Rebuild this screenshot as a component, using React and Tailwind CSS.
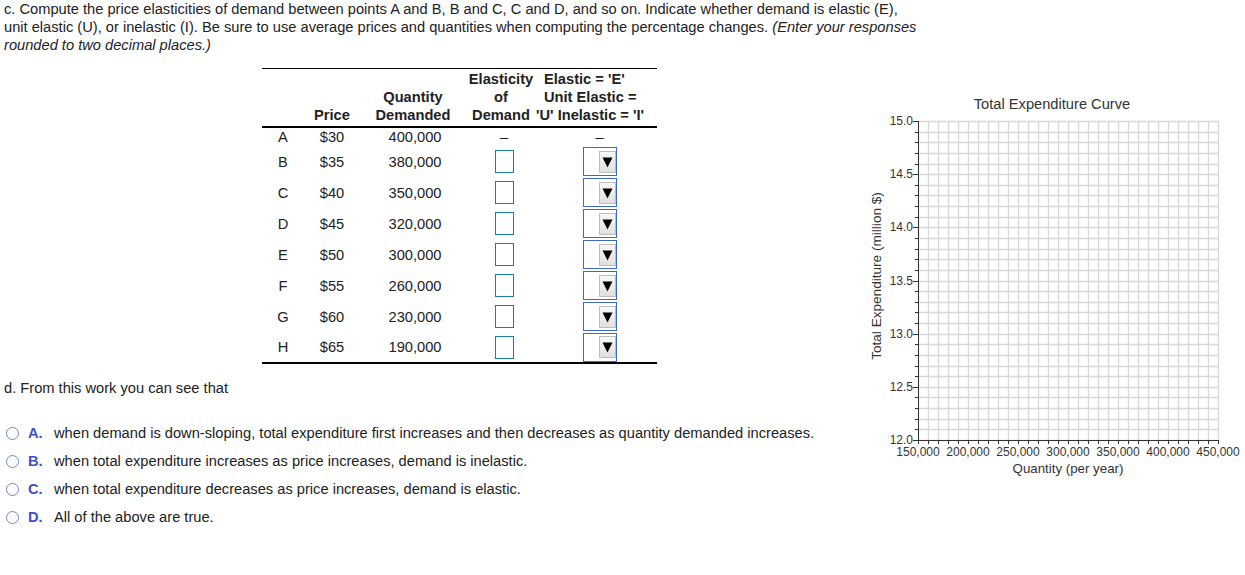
import React from 'react';

const rows = [
  { k: 'A', p: '$30', q: '400,000', first: true },
  { k: 'B', p: '$35', q: '380,000' },
  { k: 'C', p: '$40', q: '350,000' },
  { k: 'D', p: '$45', q: '320,000' },
  { k: 'E', p: '$50', q: '300,000' },
  { k: 'F', p: '$55', q: '260,000' },
  { k: 'G', p: '$60', q: '230,000' },
  { k: 'H', p: '$65', q: '190,000' },
];

const options = [
  { l: 'A.', t: 'when demand is down-sloping, total expenditure first increases and then decreases as quantity demanded increases.' },
  { l: 'B.', t: 'when total expenditure increases as price increases, demand is inelastic.' },
  { l: 'C.', t: 'when total expenditure decreases as price increases, demand is elastic.' },
  { l: 'D.', t: 'All of the above are true.' },
];

const Dropdown = () => (
  <div className="w-[34px] h-[29px] mx-auto border-[1.5px] border-[#3b69c9] flex items-center justify-end">
    <div className="w-[17px] h-[22px] border border-[#bdbdbd] bg-gradient-to-b from-[#f8f8f8] to-[#e0e0e0] flex items-center justify-center">
      <svg width="11" height="12" viewBox="0 0 11 12">
        <polygon points="0.5,1.5 10.5,1.5 5.5,11.5" fill="#000" />
      </svg>
    </div>
  </div>
);

const InputBox = () => (
  <div className="w-[19px] h-[23px] mx-auto border-[1.5px] border-[#17809e] bg-white" />
);

const Chart = () => {
  const L = 58;
  const T = 29;
  const W = 300;
  const H = 319;
  const B = T + H;
  const vs = Array.from({ length: 31 }, (_, i) => i);
  const yLabels = ['15.0', '14.5', '14.0', '13.5', '13.0', '12.5', '12.0'];
  const xLabels = ['150,000', '200,000', '250,000', '300,000', '350,000', '400,000', '450,000'];
  return (
    <svg width="385" height="392" className="block mt-[38px] shrink-0" style={{ fontFamily: '"Liberation Sans", Arial, sans-serif' }}>
      <text x="192" y="17" fontSize="14.67" fill="#333" textAnchor="middle">Total Expenditure Curve</text>
      {vs.map((i) => (
        <line key={'v' + i} x1={L + i * 10 + 0.5} x2={L + i * 10 + 0.5} y1={T} y2={B} stroke="#d8d8d8" strokeWidth="1.3" />
      ))}
      {vs.map((j) => {
        const y = Math.round(T + (H * j) / 30) + 0.5;
        return <line key={'h' + j} x1={L} x2={L + W + 1} y1={y} y2={y} stroke="#d8d8d8" strokeWidth="1.3" />;
      })}
      <line x1={L + 0.5} x2={L + 0.5} y1={T} y2={B + 1} stroke="#333" strokeWidth="1" />
      <line x1={L} x2={L + W + 1} y1={B + 0.5} y2={B + 0.5} stroke="#333" strokeWidth="1" />
      {vs.map((j) => {
        const y = Math.round(T + (H * j) / 30) + 0.5;
        const major = j % 5 === 0;
        return <line key={'yt' + j} x1={L - (major ? 5 : 3)} x2={L} y1={y} y2={y} stroke="#333" strokeWidth="1" />;
      })}
      {vs.map((i) => (
        <line key={'xt' + i} x1={L + i * 10 + 0.5} x2={L + i * 10 + 0.5} y1={B} y2={B + 4} stroke="#333" strokeWidth="1" />
      ))}
      {yLabels.map((t, k) => (
        <text key={t} x={L - 5} y={T + (H * k * 5) / 30 + 4} fontSize="12" fill="#333" textAnchor="end">{t}</text>
      ))}
      {xLabels.map((t, k) => (
        <text key={t} x={L + k * 50} y={B + 16} fontSize="12" fill="#333" textAnchor="middle">{t}</text>
      ))}
      <text x="208" y="381" fontSize="13.3" fill="#333" textAnchor="middle">Quantity (per year)</text>
      <text x="0" y="0" fontSize="13.6" fill="#333" textAnchor="middle" transform="translate(21 184) rotate(-90)">Total Expenditure (million $)</text>
    </svg>
  );
};

export default function App() {
  return (
    <div className="w-[1245px] h-[575px] bg-white text-[#222] overflow-hidden" style={{ fontFamily: '"Liberation Sans", Arial, sans-serif' }}>
      <div className="pl-[4px] text-[14.67px] leading-[18px] whitespace-nowrap">
        <div>c. Compute the price elasticities of demand between points A and B, B and C, C and D, and so on. Indicate whether demand is elastic (E),</div>
        <div>
          unit elastic (U), or inelastic (I). Be sure to use average prices and quantities when computing the percentage changes. <i>(Enter your responses</i>
        </div>
        <div><i>rounded to two decimal places.)</i></div>
      </div>

      <div className="flex">
        <div className="w-[860px] shrink-0">
          <table className="ml-[262px] mt-[14px] border-collapse text-[14.67px] leading-[18px]">
            <thead>
              <tr className="border-t border-b-2 border-black">
                <th className="w-[42px]" />
                <th className="w-[56px] align-bottom font-bold pb-[2px]">Price</th>
                <th className="w-[106px] align-bottom font-bold pb-[2px]">
                  <div>Quantity</div>
                  <div>Demanded</div>
                </th>
                <th className="w-[70px] align-bottom font-bold pb-[2px] pt-[1px]">
                  <div>Elasticity</div>
                  <div>of</div>
                  <div>Demand</div>
                </th>
                <th className="w-[121px] align-bottom font-bold pb-[2px] pt-[1px] text-left whitespace-nowrap">
                  <div className="pl-[8px]">Elastic = 'E'</div>
                  <div className="pl-[8px]">Unit Elastic =</div>
                  <div>'U' Inelastic = 'I'</div>
                </th>
              </tr>
            </thead>
            <tbody className="border-b-2 border-black">
              {rows.map((r) => (
                <tr key={r.k} className={r.first ? 'h-[19px]' : 'h-[31px]'}>
                  <td className="text-center p-0">{r.k}</td>
                  <td className="text-center p-0">{r.p}</td>
                  <td className="text-center p-0 pl-[4px]">{r.q}</td>
                  <td className="text-center p-0 pl-[6px]">{r.first ? '–' : <InputBox />}</td>
                  <td className="text-center p-0 pl-[6px]">{r.first ? '–' : <Dropdown />}</td>
                </tr>
              ))}
            </tbody>
          </table>

          <div className="pl-[4px] mt-[15px] text-[14.67px] leading-[18px]">d. From this work you can see that</div>

          <div className="mt-[22px] text-[14.67px]">
            {options.map((o) => (
              <div key={o.l} className="h-[28px] flex items-center whitespace-nowrap">
                <span className="ml-[6px] w-[13px] h-[13px] rounded-full border-[1.5px] border-[#7088d2] bg-white shrink-0" />
                <span className="ml-[9px] w-[26px] font-bold text-[#3b52c4]">{o.l}</span>
                <span>{o.t}</span>
              </div>
            ))}
          </div>
        </div>
        <Chart />
      </div>
    </div>
  );
}
